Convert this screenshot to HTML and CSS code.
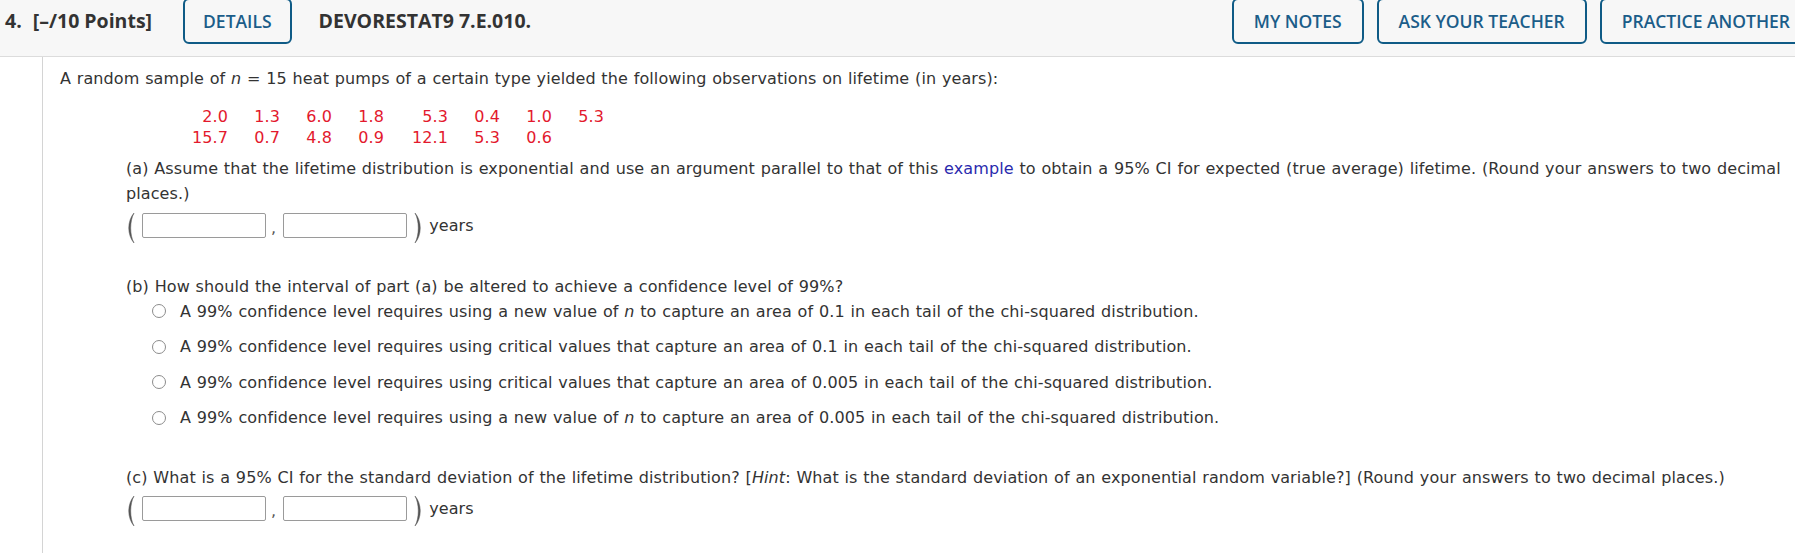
FILE: index.html
```html
<!DOCTYPE html>
<html lang="en">
<head>
<meta charset="utf-8">
<title>Question 4</title>
<link rel="stylesheet" href="styles.css">
</head>
<body>
<header class="qhead">
  <span class="qnum">4.</span>
  <span class="qpts">[–/10 Points]</span>
  <button class="btn btn-details">DETAILS</button>
  <span class="qid">DEVORESTAT9 7.E.010.</span>
  <div class="actions">
    <button class="btn">MY NOTES</button>
    <button class="btn">ASK YOUR TEACHER</button>
    <button class="btn">PRACTICE ANOTHER</button>
  </div>
</header>

<main class="qbody">
  <p class="intro">A random sample of <i>n</i> = 15 heat pumps of a certain type yielded the following observations on lifetime (in years):</p>

  <table class="data">
    <tr><td class="c1">2.0</td><td>1.3</td><td>6.0</td><td>1.8</td><td class="c5">5.3</td><td>0.4</td><td>1.0</td><td>5.3</td></tr>
    <tr><td class="c1">15.7</td><td>0.7</td><td>4.8</td><td>0.9</td><td class="c5">12.1</td><td>5.3</td><td>0.6</td><td></td></tr>
  </table>

  <section class="part part-a">
    <p>(a) Assume that the lifetime distribution is exponential and use an argument parallel to that of this <a class="link" href="#">example</a> to obtain a 95% CI for expected (true average) lifetime. (Round your answers to two decimal places.)</p>
    <div class="answer answer-a">
      <svg class="paren" width="9" height="32" viewBox="0 0 9 32"><path d="M8 1 C1 9 1 23 8 31 C3.6 23 3.6 9 8 1 Z" fill="#555" stroke="#555" stroke-width="0.5"/></svg>
      <span class="blank"></span><span class="comma">,</span><span class="blank"></span>
      <svg class="paren paren-r" width="9" height="32" viewBox="0 0 9 32"><path d="M1 1 C8 9 8 23 1 31 C5.4 23 5.4 9 1 1 Z" fill="#555" stroke="#555" stroke-width="0.5"/></svg>
      <span class="units">years</span>
    </div>
  </section>

  <section class="part part-b">
    <p>(b) How should the interval of part (a) be altered to achieve a confidence level of 99%?</p>
    <ul class="options">
      <li><span class="radio"></span><span class="opt">A 99% confidence level requires using a new value of <i>n</i> to capture an area of 0.1 in each tail of the chi-squared distribution.</span></li>
      <li><span class="radio"></span><span class="opt">A 99% confidence level requires using critical values that capture an area of 0.1 in each tail of the chi-squared distribution.</span></li>
      <li><span class="radio"></span><span class="opt">A 99% confidence level requires using critical values that capture an area of 0.005 in each tail of the chi-squared distribution.</span></li>
      <li><span class="radio"></span><span class="opt">A 99% confidence level requires using a new value of <i>n</i> to capture an area of 0.005 in each tail of the chi-squared distribution.</span></li>
    </ul>
  </section>

  <section class="part part-c">
    <p>(c) What is a 95% CI for the standard deviation of the lifetime distribution? [<i>Hint</i>: What is the standard deviation of an exponential random variable?] (Round your answers to two decimal places.)</p>
    <div class="answer">
      <svg class="paren" width="9" height="32" viewBox="0 0 9 32"><path d="M8 1 C1 9 1 23 8 31 C3.6 23 3.6 9 8 1 Z" fill="#555" stroke="#555" stroke-width="0.5"/></svg>
      <span class="blank"></span><span class="comma">,</span><span class="blank"></span>
      <svg class="paren paren-r" width="9" height="32" viewBox="0 0 9 32"><path d="M1 1 C8 9 8 23 1 31 C5.4 23 5.4 9 1 1 Z" fill="#555" stroke="#555" stroke-width="0.5"/></svg>
      <span class="units">years</span>
    </div>
  </section>
</main>
</body>
</html>
```

FILE: styles.css
```css
html, body {
  margin: 0;
  padding: 0;
  overflow: hidden;
  background: #ffffff;
}

body {
  width: 1795px;
  height: 553px;
  font-family: Verdana, "DejaVu Sans", sans-serif;
  font-size: 16px;
  color: #333333;
}

/* ---------- header ---------- */
.qhead {
  display: flex;
  align-items: flex-start;
  height: 57px;
  box-sizing: border-box;
  padding-left: 5px;
  margin-right: -17px;
  background: #f7f7f7;
  border-bottom: 1px solid #dcdcdc;
  font-family: "Open Sans", "Liberation Sans", sans-serif;
  color: #333333;
}

.qnum,
.qpts,
.qid {
  margin-top: -2px;
  font-size: 19.5px;
  font-weight: 700;
  line-height: 46px;
  white-space: nowrap;
}

.qpts {
  margin-left: 11px;
}

.qid {
  margin-left: 27px;
}

.btn {
  margin-top: -2px;
  height: 46px;
  box-sizing: border-box;
  padding: 0 20px;
  border: 2px solid #0f5b86;
  border-radius: 6px;
  background: transparent;
  font-family: "Open Sans", "Liberation Sans", sans-serif;
  font-size: 17.5px;
  font-weight: 600;
  color: #1b5d89;
  white-space: nowrap;
}

.btn-details {
  margin-left: 31px;
  padding: 0 18px;
}

.actions {
  display: flex;
  gap: 13px;
  margin-left: auto;
}

/* ---------- body ---------- */
.qbody {
  display: block;
  height: 496px;
  box-sizing: border-box;
  margin-left: 42px;
  padding: 9px 0 0 17px;
  border-left: 1px solid #d4d4d4;
  word-spacing: 0.55px;
  letter-spacing: 0.1px;
}

p {
  margin: 0;
  line-height: 25px;
}

.data {
  margin: 16px 0 0 106px;
  border-collapse: collapse;
  border-spacing: 0;
  color: #e3192d;
  line-height: 20.5px;
}

.data td {
  padding: 0 0 0 26px;
  width: 26px;
  text-align: right;
  white-space: nowrap;
}

.data td.c1 {
  width: 36px;
}

.data td.c5 {
  width: 38px;
}

.part {
  margin-left: 66px;
}

.part-a {
  margin-top: 7.5px;
}

.part-b {
  margin-top: 30px;
}

.part-c {
  margin-top: 35px;
}

.link {
  color: #2a2aae;
  text-decoration: none;
}

.answer {
  display: flex;
  align-items: center;
  height: 36px;
}

.answer-a {
  margin-top: 2px;
}

.paren {
  display: block;
  margin-top: 5px;
  margin-right: 7px;
}

.paren-r {
  margin-right: 0;
  margin-left: 7px;
}

.blank {
  display: block;
  width: 124px;
  height: 25px;
  box-sizing: border-box;
  border: 1px solid #9a9a9a;
  border-radius: 2px;
  background: #ffffff;
}

.comma {
  margin: 4px 7px 0 5px;
  color: #555555;
}

.units {
  margin-left: 6px;
}

.options {
  list-style: none;
  margin: 0;
  padding: 0 0 0 26px;
}

.options li {
  display: flex;
  align-items: center;
  line-height: 25px;
  margin-top: 10.5px;
}

.options li:first-child {
  margin-top: 0;
}

.radio {
  flex: none;
  width: 14px;
  height: 14px;
  box-sizing: border-box;
  margin-right: 14px;
  border: 1px solid #8c8c8c;
  border-radius: 50%;
  background: #ffffff;
}
```
